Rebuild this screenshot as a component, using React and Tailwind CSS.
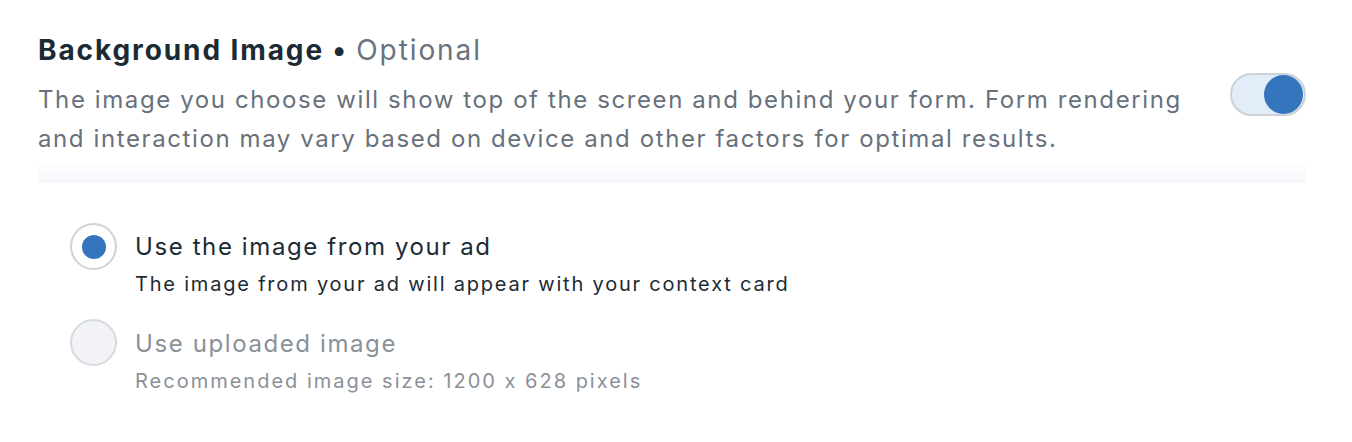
export default function App() {
  return (
    <div className="w-full h-[442px] bg-white pl-[38px] pr-[46px] pt-[32px] [font-feature-settings:'calt'_0]" style={{ fontFamily: "Inter, 'Noto Sans', sans-serif" }}>
      <div className="flex justify-between items-start">
        <div className="w-[1160px]">
          <div className="text-[28px] leading-[36px] font-bold text-[#1c2b33] tracking-[1.9px]">
            Background Image <span className="text-[#1c2b33]">•</span> <span className="font-normal text-[#6a737d]">Optional</span>
          </div>
          <p className="mt-[12px] text-[24px] leading-[39px] text-[#67717c] tracking-[1.6px]">
            The image you choose will show top of the screen and behind your form. Form rendering and interaction may vary based on device and other factors for optimal results.
          </p>
        </div>
        <button className="mt-[41px] w-[76px] h-[43px] rounded-full bg-[#e2edf7] border-2 border-[#ccd2d8] flex items-center justify-end pr-[1px] shrink-0">
          <span className="block w-[39px] h-[39px] rounded-full bg-[#3575bd]" />
        </button>
      </div>
      <div className="mt-[3px] h-[22px] bg-gradient-to-b from-white to-[#f5f6fb]" />
      <div className="bg-white rounded-t-[8px] pl-[32px] pt-[40px]">
        <div className="flex items-start gap-[18px]">
          <span className="w-[47px] h-[47px] rounded-full border-2 border-[#ced3d9] bg-white flex items-center justify-center shrink-0">
            <span className="block w-[24px] h-[24px] rounded-full bg-[#3575bd]" />
          </span>
          <div className="pt-[7px]">
            <div className="text-[24px] leading-[34px] text-[#1c2b33] tracking-[1.6px]">Use the image from your ad</div>
            <div className="text-[20px] leading-[40px] text-[#1c2b33] tracking-[1.8px]">The image from your ad will appear with your context card</div>
          </div>
        </div>
        <div className="mt-[15px] flex items-start gap-[18px]">
          <span className="w-[47px] h-[47px] rounded-full border-2 border-[#d6dadf] bg-[#f1f3f6] shrink-0" />
          <div className="pt-[8px]">
            <div className="text-[24px] leading-[34px] text-[#899199] tracking-[1.6px]">Use uploaded image</div>
            <div className="text-[20px] leading-[40px] text-[#899199] tracking-[2px]">Recommended image size: 1200 x 628 pixels</div>
          </div>
        </div>
      </div>
    </div>
  );
}
